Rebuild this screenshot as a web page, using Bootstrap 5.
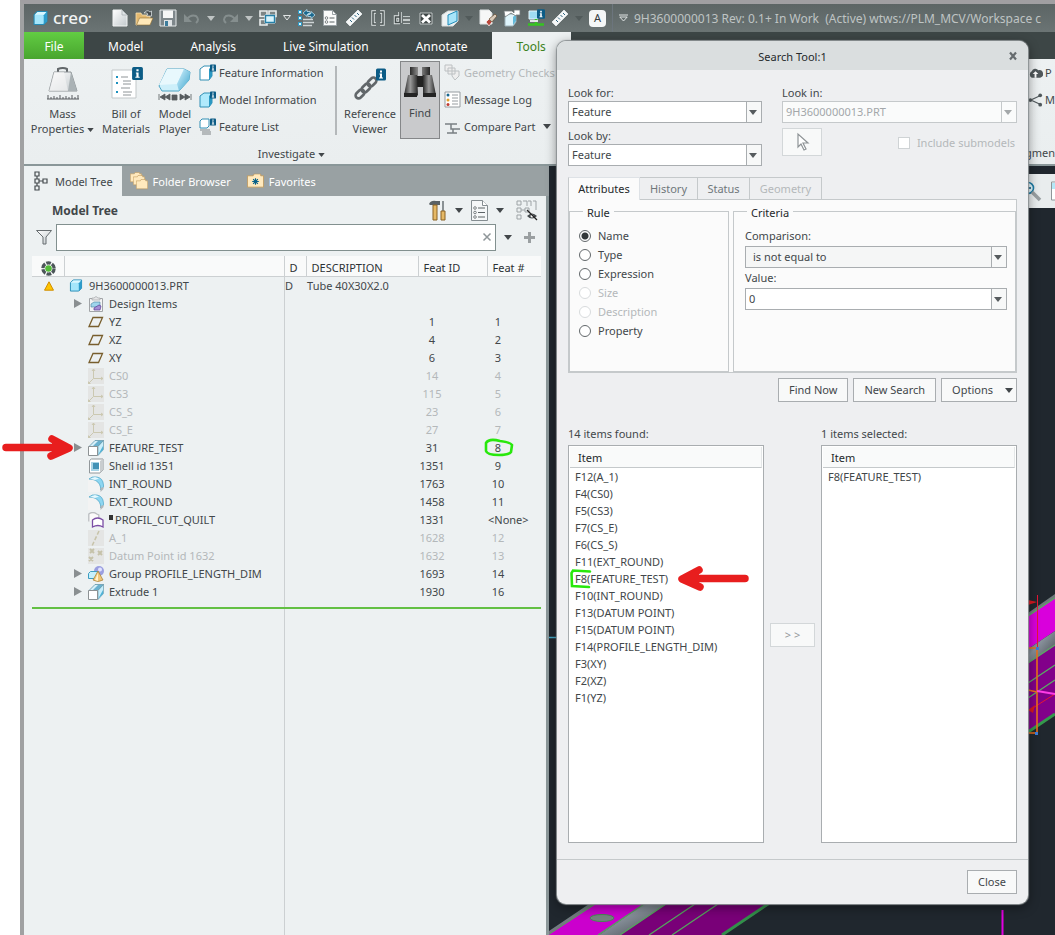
<!DOCTYPE html>
<html lang="en">
<head>
<meta charset="utf-8">
<meta name="viewport" content="width=device-width, initial-scale=1">
<title>Creo - Search Tool</title>
<link rel="stylesheet" href="https://cdn.jsdelivr.net/npm/bootstrap@5.3.0/dist/css/bootstrap.min.css">
<style>
:root{--ink:#42474a;--pane:#edf1f2;--line:#c5c9cb;--ctl:#a9adb0;--dim:#b4b8ba;
 --caret:url("data:image/svg+xml,%3Csvg xmlns='http://www.w3.org/2000/svg' viewBox='0 0 8 5'%3E%3Cpath d='M0 0h8L4 5z' fill='%23565b5e'/%3E%3C/svg%3E");
 --caret-dim:url("data:image/svg+xml,%3Csvg xmlns='http://www.w3.org/2000/svg' viewBox='0 0 8 5'%3E%3Cpath d='M0 0h8L4 5z' fill='%23a4a8aa'/%3E%3C/svg%3E")}
body{font-family:"Noto Sans",sans-serif;font-size:11px;line-height:15px;color:var(--ink);background:#fff;overflow:hidden}
svg{display:block;flex:none}
button{font-family:inherit;color:inherit}
.app{margin-left:20px;border-left:4px solid #a0a1a2;border-top:4px solid #a09fa2;min-height:100vh;background:var(--pane)}
.titlebar{height:28px;background:linear-gradient(#5c6565,#6b7474);padding-left:9px;gap:6px;color:#bfc4c4;overflow:hidden;font-size:12px}
.brand{width:72px;gap:5px;color:#f2f4f4;font:500 17px/20px "Noto Sans",sans-serif}
.brand sup{font-size:8px}
.tool{border:0;background:none;padding:0}
.keya{color:#363c3e;background:#f4f6f6;width:17px;height:17px;line-height:14px;font-size:11px}
.menubar{height:27px;background:#3d4646;gap:1px;font-size:12px}
.menubar .nav-link{color:#fff;padding:7px 23px 5px;line-height:15px;border-radius:0}
.menubar .file{background:linear-gradient(#62cc43,#48a52e);width:60px;padding:7px 0 5px;text-align:center}
.menubar .nav-link.active{background:var(--pane);color:#3c8220;padding:7px 25px 5px}
.ribbon{height:107px;border-bottom:2px solid #8a9799;background:linear-gradient(#edf1f2,#eaeeef);padding-left:4px;overflow:hidden}
.tools-row{height:84px}
.group-name{height:21px;padding-top:3px}
.big{border:1px solid transparent;background:none;padding:3px 0 0;height:78px;line-height:15px;display:flex;flex-direction:column;align-items:center;white-space:nowrap}
.big svg.pic{margin-bottom:5px}
.big.pressed{border-color:#858789;background:#c9cacc;width:40px;margin-top:-2px;padding-top:4px}
.w-mass{width:69px}.w-bill{width:58px}.w-play{width:40px}.w-refv{width:60px;margin-left:3px}.w-minis{width:140px}
.minis{margin-top:-4px}
.mini{border:0;background:none;padding:0;height:27px;gap:3px;white-space:nowrap}
.side{width:30px}
.side div.line{height:27px;gap:2px;padding-left:3px}
.dim{color:var(--dim)!important}
.vrule{width:2px;height:69px;background:#b4b8ba;margin-top:3px}
.panel{width:525px;flex:none;border-right:3px solid #8b9799}
.ptabs{height:30px;background:#99a1a3;margin-right:-3px}
.ptabs .nav-link{color:#fff;padding:0 8px;gap:5px;border-radius:0;height:30px}
.ptabs .nav-link.active{background:var(--pane);color:var(--ink);gap:6px;padding:0 9px}
.phead{height:28px;padding:0 8px 0 28px}
.phead strong{font-size:12px}
.pfilter{padding:0 11px 0 12px}
.filterbox{height:27px;border:1px solid #82908f;border-radius:0;padding:0 24px 0 6px;font-size:12px;background:#fff;min-height:0}
.clearx{right:4px;top:7px}
.treewrap{margin:5px 5px 0 8px;background:linear-gradient(#ccd0d2,#ccd0d2) 252px 0/1px 100% no-repeat}
.tree{table-layout:fixed;margin:0;line-height:17px;color:var(--ink)}
.tree th{height:20px;padding:1px 0 0 5px;font-weight:400;line-height:17px;background:#f9fafa;border-bottom:1px solid #ccd0d2;border-left:1px solid #ccd0d2;color:#2c3134;white-space:nowrap}
.tree th:first-child{border-left:0}
.tree td{height:18px;padding:0;border:0;background:none;white-space:nowrap;color:inherit;line-height:18px}
.tree tr.off{color:var(--dim)}
.tree tr.off svg{opacity:.9}
.c-stat{width:32px}.c-name{width:220px}.c-d{width:22px}.c-desc{width:112px}.c-id{width:69px}
.node{gap:5px;height:18px;padding-left:24px}
.node.branch{padding-left:10px}
.node.root{padding-left:5px;gap:6px}
.node .twist{margin-right:1px}
.quiltdot{margin:4px 2px 0 0}
.warn{margin:0 0 0 12px}
.fid,.fno{display:inline-block;text-align:center;margin-left:1px}
.fid{width:26px;white-space:nowrap}.fno{width:20px}
.insert{height:2px;background:#63c044;margin-top:6px}
.view{background:#20272e;min-width:0;min-height:769px}
.vtools{right:0;top:8px;width:56px;height:34px;background:#e9edee}
.dialog{right:27px;top:41px;width:471px;background:#eeeff1;border-radius:9px;box-shadow:0 0 1px 1px #8c9294,0 3px 12px #0007;overflow:hidden}
.dhead{height:29px;background:#dadedf;color:#25292b;padding-top:2px}
.closex{right:10px;top:9px}
.dbody{padding:15px 11px 16px}
.cols{gap:20px}
.leftcol{width:194px}
.leftcol label+select{margin-bottom:5px}
.dbody .leftcol label,.dbody .rightcol>label{padding-bottom:1px}
.picker{width:40px;margin-top:5px}
.pick{appearance:none;display:block;width:100%;height:22px;border:1px solid var(--ctl);border-radius:0;padding:0 20px 0 3px;font:11px/20px "Noto Sans",sans-serif;color:var(--ink);background:var(--caret) right 4px center/8px 5px no-repeat,linear-gradient(var(--ctl),var(--ctl)) right 14px top/1px 100% no-repeat,linear-gradient(#f7f8f8,#f7f8f8) right top/14px 100% no-repeat,#fff}
.pick.flat{background-color:#f5f6f6;padding-left:7px}
.pick:disabled{border-color:var(--line);color:#a3a7aa;opacity:1;background:var(--caret-dim) right 4px center/8px 5px no-repeat,linear-gradient(var(--line),var(--line)) right 14px top/1px 100% no-repeat,#fafbfb}
.dbtn{border:1px solid var(--ctl);border-radius:0;background:#f8f9f9;height:24px;padding:0 10px;font-size:11px;line-height:20px;color:var(--ink)}
.dbtn:disabled{border-color:#d3d7d9;background:#f8f9f9;color:#94989b;opacity:1}
.dbtn.sel{width:40px;height:28px}
.dbtn.move{width:45px}
.dbtn.opts{gap:12px;padding-right:3px}
.tickrow{gap:7px;padding-right:2px}
.form-check-input.tick{width:12px;height:12px;margin:0;float:none;border:1px solid #cfd3d5;border-radius:0;opacity:1}
.dtabs{border:0;height:23px;margin-top:11px}
.dtabs .nav-link{border:1px solid var(--line);border-left:0;border-radius:0;border-bottom:0;padding:0;height:22px;line-height:22px;color:#70777b;background:#eeeff1;text-align:center}
.dtabs .nav-link.active{border-left:1px solid var(--line);background:#fbfbfb;color:#25292b;height:23px}
.t72{width:72px}.t58{width:58px}.t52{width:52px}
.tabbody{border:1px solid var(--line);background:#fbfbfb;height:174px;padding-top:11px;gap:4px;margin-top:-1px}
.box{position:relative;border:1px solid var(--line);height:161px;margin:0;min-width:0;padding:16px 8px 0 11px}
.box.rule{width:160px;padding:14px 8px 0 9px}
.box legend{position:absolute;top:-7px;left:13px;width:auto;padding:0 4px;margin:0;background:#fbfbfb;font-size:11px;line-height:16px;color:#25292b;float:none}
.box .pick{margin:3px 0 2px}
.opt{height:19px;gap:7px}
.opt input{appearance:none;width:12px;height:12px;margin:0;border:1px solid #62676a;border-radius:50%;background:#fff}
.opt input:checked{background:radial-gradient(circle,#33383a 0 3px,#fff 4px)}
.opt input:disabled{border-color:#d8dbdd}
.actions{gap:5px;margin:5px 0 24px}
.caption{height:19px}
.found{width:196px;height:398px;border:1px solid var(--ctl);background:#fff;padding:1px}
.found h2{font-size:11px;font-weight:400;line-height:22px;height:21px;margin:0;padding-left:8px;background:#f9fafa;border:1px solid #e4e7e8;border-bottom-color:var(--line);border-width:0 1px 1px 0;color:#25292b}
.found li{height:17px;line-height:17px;padding-left:5px;position:relative;width:max-content}
.dfoot{border-top:1px solid var(--line);height:45px;padding:10px 11px}
.mark-over{position:absolute;pointer-events:none}
.m-f8{left:0;top:-1px}.m-left{left:107px;top:-5px}.m-right{left:-31px;top:-5px}.m-eight{left:-3px;top:-1px}
</style>
</head>
<body>
<svg width="0" height="0" class="position-absolute" aria-hidden="true">
<defs>
<linearGradient id="gs" x1="0" y1="0" x2="1" y2="1"><stop stop-color="#fff"/><stop offset="1" stop-color="#c2c9cc"/></linearGradient>
<linearGradient id="gb" x1="0" y1="0" x2="1" y2="1"><stop stop-color="#d8f4ff"/><stop offset="1" stop-color="#3da5cd"/></linearGradient>
<linearGradient id="gd" x1="0" x2="1"><stop stop-color="#2a2a2a"/><stop offset=".45" stop-color="#9a9a9a"/><stop offset="1" stop-color="#252525"/></linearGradient>
<linearGradient id="gt" x1="0" y1="0" x2="1" y2="1"><stop stop-color="#5d646a"/><stop offset=".4" stop-color="#88919b"/><stop offset="1" stop-color="#3f4549"/></linearGradient>
<symbol id="caret" viewBox="0 0 8 5"><path d="M0 0h8L4 5z" fill="currentColor"/></symbol>
<symbol id="info" viewBox="0 0 10 12"><rect width="10" height="12" rx="1.5" fill="#0c5c86"/><path d="M4 2h2v2H4zM3.500 5H6v4h1v1H3V9h1V6h-.5z" fill="#fff"/></symbol>
<symbol id="cube" viewBox="0 0 14 14"><path d="M1 4l3-3h9v9l-3 3H1z" fill="#a5e6fb" stroke="#268bb5"/><path d="M10 4.500V13l3-3V1z" fill="#2c9ccb"/><path d="M1.500 4L4.300 1.500h8L10 4z" fill="#d9f6ff"/></symbol>
<symbol id="doc" viewBox="0 0 18 18"><path d="M2 1h9l5 5v11H2z" fill="url(#gs)" stroke="#f2f4f4"/><path d="M11 1v5h5z" fill="#dfe4e6" stroke="#a9b1b4" stroke-width=".8"/></symbol>
<symbol id="doclist" viewBox="0 0 18 18"><path d="M2.500 1.500h9l4 4v11h-13z" fill="#fafbfb" stroke="#99a1a5"/><path d="M11.500 1.500v4h4" fill="none" stroke="#99a1a5"/><path d="M8.500 9h5M8.500 13h5" stroke="#5d6467"/><g fill="#fff" stroke="#5d6467" stroke-width=".8"><circle cx="5.500" cy="9" r="1.300"/><circle cx="5.500" cy="13" r="1.300"/></g></symbol>
<symbol id="doclist3" viewBox="0 0 17 21"><path d="M.5.500h11l5 5v15H.5z" fill="#f5f7f8" stroke="#858d91"/><path d="M11.500.5v5h5" fill="#fff" stroke="#858d91"/><path d="M7 8h7M7 12.500h7M7 17h7" stroke="#5d6467"/><g fill="#fff" stroke="#5d6467" stroke-width=".8"><circle cx="4" cy="8" r="1.300"/><circle cx="4" cy="12.500" r="1.300"/><circle cx="4" cy="17" r="1.300"/></g></symbol>
<symbol id="open" viewBox="0 0 18 18"><path d="M1 4h5l1 2h8v4H4l-2 6H1z" fill="#e4b970" stroke="#f5deb0" stroke-width=".8"/><path d="M4.500 9H18l-3 7H1.500z" fill="#ffe8b8" stroke="#8f6d31" stroke-width=".6"/><path d="M9 4q3-4 6-1l1.500-1v5h-5l1.500-2Q11 3 9 4z" fill="#454b4d" stroke="#e7ecee" stroke-width=".7"/></symbol>
<symbol id="save" viewBox="0 0 18 18"><path d="M1 1h16v16H1z" fill="#7e878b" stroke="#e6eaeb"/><path d="M4 1.500h10V9H4z" fill="#f5f6f6"/><path d="M5 11h8v6H5z" fill="#dfe3e5"/><path d="M6 12h3v5H6z" fill="#3e7d9c"/></symbol>
<symbol id="undo" viewBox="0 0 18 18"><path d="M4 10q4-5 9-3 4 3.500 0 7" fill="none" stroke="#858e8e" stroke-width="2"/><path d="M1 5v8h8z" fill="#858e8e"/></symbol>
<symbol id="wins" viewBox="0 0 18 18"><g fill="#7d8585" stroke="#e9eded" stroke-width="1.600"><path d="M1 2h7v5.500H1zM10 2h7v5.500h-7zM1 10.500h7V16H1z"/></g><path d="M6 6h10v8H6z" fill="#d9f4fd" stroke="#fff"/><path d="M6.500 6.500h9v7h-9z" fill="none" stroke="#2580a8" stroke-width="1.400"/></symbol>
<symbol id="regen" viewBox="0 0 18 18"><g fill="#dff5fd" stroke="#2c9ac6"><path d="M1.500 1.500h3v3h-3zM1.500 7.500h3v3h-3zM1.500 13.500h3v3h-3z"/></g><path d="M6 10.500h10M6 13.500h11M6 16.500h9" stroke="#ced4d5" stroke-width="1.500"/><path d="M6 4l4-3.500v2h3v3h-3v2zM18 6l-4-3.500v2h-3v3h3v2z" fill="#1a678d" stroke="#c9edfb" stroke-width=".7"/></symbol>
<symbol id="ruler" viewBox="0 0 18 18"><path d="M1 13L13 1l4 4L5 17z" fill="#f6f7f7" stroke="#dde2e3"/><path d="M5 11l2 2M7 8.500l2 2M9.500 6l2 2M12 4l2 2" stroke="#2c6480"/></symbol>
<symbol id="brackets" viewBox="0 0 18 18"><path d="M7 3H4v12h3M11 3h3v12h-3" fill="none" stroke="#dfe4e4" stroke-width="3.400"/><path d="M7 3H4v12h3M11 3h3v12h-3" fill="none" stroke="#454d4d" stroke-width="1.500"/></symbol>
<symbol id="dim" viewBox="0 0 18 18"><g fill="none" stroke="#e2e7e7" stroke-width="3.400"><path d="M7 3v11M7 8H2.500v5.500H7M10 9h7M10 13h7"/></g><g fill="none" stroke="#454d4d" stroke-width="1.600"><path d="M7 3v11M7 8H2.500v5.500H7M10 9h7M10 13h7"/></g></symbol>
<symbol id="xbox" viewBox="0 0 18 18"><path d="M3 4h12v11H3z" fill="#3f4747" stroke="#d8dddd" stroke-width=".8"/><path d="M5 6l8 7.500M13 6l-8 7.500" stroke="#fff" stroke-width="2.800"/></symbol>
<symbol id="frame" viewBox="0 0 18 18"><path d="M1 6l6-4h10v10l-5 5H1z" fill="#eef2f3" stroke="#d8dddd"/><path d="M7 6l9-4v10l-9 4z" fill="#a8e5fa" stroke="#1f8cb9"/></symbol>
<symbol id="erase" viewBox="0 0 18 18"><path d="M1 1h9l3 3v11H1z" fill="#f6f7f7" stroke="#dde1e2"/><path d="M7 13l3-3 3 3-3 4z" fill="#b9483c" stroke="#fff" stroke-width=".7"/><path d="M10 10l6-5 2 2-5 6z" fill="#d9cbbb" stroke="#62482c" stroke-width=".7"/></symbol>
<symbol id="camera" viewBox="0 0 18 18"><path d="M2 8l3-3h8v8l-3 4H2z" fill="#dff5fc" stroke="#9eb2ba"/><path d="M10 8v8l3-4V5z" fill="#61b9d9"/><path d="M1 2h8l2 2V1h6v5h-4v1L8 4 2 8z" fill="#fff" stroke="#747b7e" stroke-width=".8"/></symbol>
<symbol id="net" viewBox="0 0 18 18"><path d="M2 2h9v8H2z" fill="#9fdcf2" stroke="#e4f5fb"/><path d="M9 10v5M1 15.500h16" stroke="#36c421" stroke-width="2.600"/><path d="M3 12h8" stroke="#e2e6e8" stroke-width="2"/><use href="#info" x="10" width="8" height="10"/></symbol>
<symbol id="cs" viewBox="0 0 16 16"><path d="M0 0h16v16H0z" fill="#e4e4e3"/><path d="M5.500 1v9.500H15M5.500 10.500L1 15M4 3l1.500-2L7 3M13 9l2 1.500-2 1.500" fill="none" stroke="#c8c4aa"/><path d="M0 13v3h3z" fill="#c8c4aa"/></symbol>
<symbol id="plane" viewBox="0 0 16 16"><path d="M5 3.500h9.500l-4 9H1z" fill="none" stroke="#785e2d" stroke-width="1.300"/></symbol>
<symbol id="extrude" viewBox="0 0 16 16"><path d="M1 6.500L7 .5h8.500L10 6.500z" fill="#69b1cf" stroke="#568b9e" stroke-width=".6"/><path d="M7 1h3L5 6H2z" fill="#d8eff8"/><path d="M10 6.500l5.500-6v9L10 15.500z" fill="#c8eefb" stroke="#568b9e" stroke-width=".6"/><path d="M10 15l5-5V6z" fill="#4fb2d6"/><path d="M.5 6.500h9v9h-9z" fill="#fff" stroke="#8d9294"/></symbol>
<symbol id="shell" viewBox="0 0 16 16"><path d="M1.500 2.500l2-1.500H15v11l-3 3H1.500z" fill="#fff" stroke="#91979a"/><path d="M12 3v12l3-3V1z" fill="#c9cdcf"/><path d="M3 4h8v9H3z" fill="#a9d4e6"/><path d="M5 5h6v6H5z" fill="#4292b6"/></symbol>
<symbol id="round" viewBox="0 0 16 16"><path d="M0 4h6l6 6v6H0z" fill="#f3f3f3"/><path d="M1 3q3-3 8-2 6 1 6.500 8v2l-3 3V11Q11 5 5 3.500z" fill="#8ed6f1" stroke="#3a9ac0" stroke-width=".6"/><path d="M2 2.700l5-1.700 4 1.500-4 1.500z" fill="#e5f8fe"/><path d="M12.500 12v4l3-3v-2z" fill="#b2b7ba"/></symbol>
<symbol id="quilt" viewBox="0 0 16 16"><path d="M.8 9.500V2q4-3 8 0l2 1v3" fill="#fafafa" stroke="#babdc0" stroke-width="1.300"/><path d="M4.500 15V8q5-4 10.500 0v7q-5-3-10.500 0z" fill="#fff" stroke="#7a4da5" stroke-width="1.300"/></symbol>
<symbol id="axis" viewBox="0 0 16 16"><path d="M0 0h16v16H0z" fill="#e4e4e3"/><path d="M11 1L4 16" stroke="#c3bfa2" stroke-width="1.500" stroke-dasharray="4 2"/></symbol>
<symbol id="points" viewBox="0 0 16 16"><path d="M0 0h16v16H0z" fill="#e4e4e3"/><path d="M2 1l4 4m0-4L2 5M10 3l4 4m0-4l-4 4M1 9l4 4m0-4l-4 4" stroke="#c1bda2" stroke-width="1.900"/></symbol>
<symbol id="group" viewBox="0 0 16 16"><circle cx="11" cy="5" r="5" fill="#9b9fe0"/><circle cx="12" cy="3.500" r="2" fill="#e1e3ff"/><path d="M.5 7.500l2-2H10v7H.5z" fill="#c5effc" stroke="#3d9dc0"/><path d="M10 5l5 9q-5 3-10 0z" fill="#efc679" stroke="#a57c33" stroke-width=".7"/><path d="M10 7v8l-3-1z" fill="#fff1ce"/></symbol>
<symbol id="clip" viewBox="0 0 16 16"><path d="M1.500 2.500h13v13h-13z" fill="#f4f4f5" stroke="#a1a4a7"/><path d="M4 4h8V2h-2L8 .5 6 2H4z" fill="#e6e7e8" stroke="#a1a4a7" stroke-width=".7"/><path d="M3 8l3-2h6v4l-3 1H3z" fill="#9fd5ec" stroke="#48829a" stroke-width=".6"/><path d="M6 12l5-3 2 1-1 4H6z" fill="#a48ed5" stroke="#5b3d96" stroke-width=".7"/></symbol>
<symbol id="folder" viewBox="0 0 18 16"><path d="M.5 2.500h6l1-2h7v2h3v12H.5z" fill="#ffe9bd" stroke="#bb9355" stroke-width=".8"/></symbol>
<symbol id="redarrow" viewBox="0 0 72 26"><path d="M4 13.500h56M50 5l17 9-18 8" fill="none" stroke="#e81e1e" stroke-width="7.500" stroke-linecap="round" stroke-linejoin="round"/><path d="M50 4l20 9.500L50 22z" fill="#e81e1e"/></symbol>
</defs></svg>

<div class="app d-flex flex-column">
 <header>
  <div class="titlebar d-flex align-items-center">
   <div class="brand d-flex align-items-center"><svg width="15" height="16"><use href="#cube"/></svg><span>creo<sup>•</sup></span></div>
   <button class="tool" aria-label="New"><svg width="18" height="18"><use href="#doc"/></svg></button>
   <button class="tool" aria-label="Open"><svg width="18" height="18"><use href="#open"/></svg></button>
   <button class="tool" aria-label="Save"><svg width="18" height="18"><use href="#save"/></svg></button>
   <button class="tool" aria-label="Undo"><svg width="18" height="18"><use href="#undo"/></svg></button>
   <svg width="8" height="5"><use href="#caret"/></svg>
   <button class="tool" aria-label="Redo"><svg width="18" height="18" viewBox="0 0 18 18"><g transform="matrix(-1 0 0 1 18 0)"><use href="#undo" width="18" height="18"/></g></svg></button>
   <svg width="8" height="5"><use href="#caret"/></svg>
   <button class="tool" aria-label="Windows"><svg width="18" height="18"><use href="#wins"/></svg></button>
   <svg width="8" height="6" viewBox="0 0 8 6"><path d="M.5.500h7L4 5z" fill="none" stroke="#e1e5e5"/></svg>
   <button class="tool" aria-label="Regenerate"><svg width="18" height="18"><use href="#regen"/></svg></button>
   <button class="tool" aria-label="List"><svg width="18" height="18"><use href="#doclist"/></svg></button>
   <button class="tool" aria-label="Measure"><svg width="18" height="18"><use href="#ruler"/></svg></button>
   <button class="tool" aria-label="Parameters"><svg width="18" height="18"><use href="#brackets"/></svg></button>
   <button class="tool" aria-label="Relations"><svg width="18" height="18"><use href="#dim"/></svg></button>
   <button class="tool" aria-label="Close window"><svg width="18" height="18"><use href="#xbox"/></svg></button>
   <button class="tool" aria-label="Display style"><svg width="18" height="18"><use href="#frame"/></svg></button>
   <svg width="8" height="5" color="#515a5a"><use href="#caret"/></svg>
   <button class="tool" aria-label="Erase"><svg width="18" height="18"><use href="#erase"/></svg></button>
   <button class="tool" aria-label="Saved views"><svg width="18" height="18"><use href="#camera"/></svg></button>
   <button class="tool" aria-label="Server"><svg width="18" height="18"><use href="#net"/></svg></button>
   <button class="tool" aria-label="Measure"><svg width="18" height="18"><use href="#ruler"/></svg></button>
   <svg width="8" height="5" color="#515a5a"><use href="#caret"/></svg>
   <button class="tool keya rounded-1">A</button>
   <span class="border-start border-secondary h-100"></span>
   <svg width="9" height="8" viewBox="0 0 9 8"><path d="M0 1h9" stroke="#dfe3e3"/><path d="M.8 3h7.400L4.500 7z" fill="none" stroke="#dfe3e3"/></svg>
   <span class="text-nowrap">9H3600000013 Rev: 0.1+ In Work &nbsp;(Active) wtws://PLM_MCV/Workspace c</span>
  </div>
  <nav class="menubar nav flex-nowrap">
   <a class="nav-link file" href="#">File</a><a class="nav-link" href="#">Model</a><a class="nav-link" href="#">Analysis</a><a class="nav-link text-nowrap" href="#">Live Simulation</a><a class="nav-link" href="#">Annotate</a><a class="nav-link active" href="#">Tools</a>
  </nav>
  <div class="ribbon d-flex">
   <div class="d-flex flex-column">
    <div class="tools-row d-flex pt-1">
     <button class="big w-mass"><svg class="pic" width="34" height="34" viewBox="0 0 34 34"><path d="M12 5V2q5-2 9 0v3" fill="none" stroke="#62676a" stroke-width="2"/><path d="M8 5h17l6 19H3z" fill="url(#gs)" stroke="#8e9497"/><path d="M8 5L3 24h19L18 5z" fill="#f6f7f7" opacity=".6"/><path d="M25 5l6 19h-9z" fill="#aab2b5"/><path d="M1 32h32M2 32v-4M5 32v-2M8 32v-3M11 32v-2M14 32v-4M17 32v-2M20 32v-3M23 32v-2M26 32v-4M29 32v-2M32 32v-4" stroke="#565b5e"/></svg><span>Mass</span><span>Properties <svg class="d-inline" width="7" height="4"><use href="#caret"/></svg></span></button>
     <button class="big w-bill"><svg class="pic" width="34" height="34" viewBox="0 0 34 34"><path d="M3 3h24v28H3z" fill="#fff" stroke="#c2c7c9"/><path d="M12 10h7M14 14h8M14 17h8M12 21h9M14 25h9M14 28h8" stroke="#8e9497"/><path d="M7 9h2v2H7zM7 15h2v2H7zM7 24h2v2H7z" fill="#1c91bf"/><use href="#info" x="23" width="11" height="13"/></svg><span>Bill of</span><span>Materials</span></button>
     <button class="big w-play"><svg class="pic" width="34" height="34" viewBox="0 0 34 34"><path d="M1 19L9 2h17l6 3-1 8-10 11H4z" fill="#cdeffa" stroke="#4ca4c4"/><path d="M1 18l8-16h17l-7 15z" fill="#e8f8fd"/><path d="M19 17l7-15 6 3-1 8-10 11z" fill="url(#gb)"/><path d="M1 27v6M7 27l-5 3 5 3zM12 27l-5 3 5 3zM14 28h5v5h-5zM22 27l5 3-5 3zM27 27l5 3-5 3zM33 27v6" fill="#565b5e" stroke="#565b5e" stroke-width=".8"/></svg><span>Model</span><span>Player</span></button>
     <div class="minis w-minis d-flex flex-column ps-1">
      <button class="mini d-flex align-items-center"><svg width="17" height="17" viewBox="0 0 17 17"><path d="M1 5l4-3h8v10l-3 4H1z" fill="#fff" stroke="#318fb4"/><path d="M10 5v11l3-4V2z" fill="#2b98c2"/><use href="#info" x="11" width="6" height="8"/></svg>Feature Information</button>
      <button class="mini d-flex align-items-center"><svg width="17" height="17" viewBox="0 0 17 17"><path d="M1 5l4-3h8v10l-3 4H1z" fill="#b1eafc" stroke="#318fb4"/><path d="M10 5v11l3-4V2z" fill="#2b98c2"/><use href="#info" x="11" width="6" height="8"/></svg>Model Information</button>
      <button class="mini d-flex align-items-center"><svg width="17" height="17" viewBox="0 0 17 17"><path d="M1 3l2-2h7v7l-2 2H1z" fill="#fff" stroke="#318fb4"/><path d="M1 12h10M3 14h9M3 16h9" stroke="#7e8487"/><use href="#info" x="11" width="6" height="8"/></svg>Feature List</button>
     </div>
     <div class="vrule"></div>
     <button class="big w-refv"><svg class="pic" width="34" height="34" viewBox="0 0 34 34"><g fill="none" stroke="#62676a" stroke-width="2.600"><rect x="2" y="24" width="10" height="6" rx="3" transform="rotate(-45 7 27)"/><rect x="8" y="18" width="10" height="6" rx="3" transform="rotate(-45 13 21)"/><rect x="14" y="12" width="10" height="6" rx="3" transform="rotate(-45 19 15)"/></g><use href="#info" x="23" y="1" width="10" height="13"/></svg><span>Reference</span><span>Viewer</span></button>
     <button class="big pressed"><svg class="pic" width="34" height="34" viewBox="0 0 34 34"><path d="M7 1h8v14H7zM19 1h8v14h-8z" fill="url(#gd)"/><path d="M13 10h8v11h-8z" fill="#222"/><path d="M5 9h9l1 20-2 2H2l-1-2z" fill="url(#gd)"/><path d="M20 9h9l4 20-2 2H21l-1-2z" fill="url(#gd)"/><path d="M1 27h13v4H1zM20 27h13v4H20z" fill="#242424"/></svg>Find</button>
     <div class="minis d-flex flex-column ps-1">
      <button class="mini d-flex align-items-center dim"><svg width="17" height="17" viewBox="0 0 17 17" fill="#eee" stroke="#bcc0c2"><path d="M1 1h7v6H1zM4 4h7v6H4zM8 7h7v5l-4 4-3-4z"/></svg>Geometry Checks</button>
      <button class="mini d-flex align-items-center"><svg width="17" height="17" viewBox="0 0 17 17"><path d="M1 1h15v15H1z" fill="#fff" stroke="#969ca0"/><path d="M8 4h6M8 7h6M8 10h6M8 13h6" stroke="#969ca0"/><circle cx="4" cy="4" r="1.500" fill="#17678f"/><circle cx="4" cy="9" r="1.500" fill="#e2a12b"/><circle cx="4" cy="13.500" r="1.500" fill="#c03b32"/></svg>Message Log</button>
      <button class="mini d-flex align-items-center"><svg width="17" height="17" viewBox="0 0 17 17" fill="none" stroke="#7a8083" stroke-width="1.500"><path d="M1 6h12M7 6v5h9M9 11v4M3 15h10"/></svg>Compare Part <svg class="ms-1" width="8" height="5"><use href="#caret"/></svg></button>
     </div>
    </div>
    <div class="group-name text-center">Investigate <svg class="d-inline" width="7" height="4"><use href="#caret"/></svg></div>
   </div>
   <div class="side ms-auto d-flex flex-column">
    <div class="line d-flex align-items-center"><svg width="15" height="12" viewBox="0 0 16 12"><path d="M4 11a4 4 0 0 1 0-7 4 4 0 0 1 7-1 4 4 0 0 1 2 8z" fill="#50585b"/><path d="M8 4L5 7h2v4h2V7h2z" fill="#fff"/></svg>P</div>
    <div class="line d-flex align-items-center"><svg width="15" height="14" viewBox="0 0 16 14"><path d="M14 2L3 7l11 5" fill="none" stroke="#50585b" stroke-width="1.200"/><circle cx="13" cy="2" r="2" fill="#50585b"/><circle cx="2.500" cy="7" r="2" fill="#50585b"/><circle cx="13" cy="12" r="2" fill="#50585b"/></svg>M</div>
    <div class="mt-auto mb-1">gmen</div>
   </div>
  </div>
 </header>

 <main class="d-flex flex-grow-1">
  <section class="panel d-flex flex-column">
   <nav class="ptabs nav">
    <a class="nav-link active d-flex align-items-center" href="#"><svg width="16" height="20" viewBox="0 0 16 20" fill="none" stroke="#454b4e" stroke-width="1.200"><path d="M2 1h4v4H2zM2 8h4v4H2zM2 15h4v4H2zM10 8h4v4h-4zM6 10h4M4 5v3M4 12v3"/></svg>Model Tree</a>
    <a class="nav-link d-flex align-items-center" href="#"><svg width="18" height="18" viewBox="0 0 18 18"><use href="#folder" width="12" height="11"/><use href="#folder" x="3" y="3" width="12" height="11"/><use href="#folder" x="6" y="7" width="12" height="11"/></svg>Folder Browser</a>
    <a class="nav-link d-flex align-items-center" href="#"><svg width="17" height="16" viewBox="0 0 18 16"><use href="#folder" width="18" height="16"/><path d="M9 5v7M5.500 8.500h7M6.500 6l5 5m0-5l-5 5" stroke="#086189" stroke-width="1.200"/></svg>Favorites</a>
   </nav>
   <div class="phead d-flex align-items-center">
    <strong class="me-auto">Model Tree</strong>
    <svg width="18" height="21" viewBox="0 0 18 21"><path d="M0 4q2-4 7-3h4v4H1z" fill="#5a6266"/><path d="M4 5h4v15H4z" fill="#e6b966" stroke="#8a6225"/><path d="M14 1v11" stroke="#687074" stroke-width="1.500"/><path d="M12 11h4v9h-4z" fill="#e6b966" stroke="#8a6225"/></svg>
    <svg width="8" height="5" class="mx-2"><use href="#caret"/></svg>
    <svg width="17" height="21" class="me-1"><use href="#doclist3"/></svg>
    <svg width="8" height="5" class="ms-1 me-2"><use href="#caret"/></svg>
    <svg class="ms-1" width="22" height="21" viewBox="0 0 22 21"><path d="M1 1h4v4H1zM1 8h4v4H1zM1 15h4v4H1zM9 8h4v4H9zM5 10h4M7 1h4v5M12 1h3v5M17 1h3v9" fill="none" stroke="#9da3a6"/><path d="M11 16q5-5 10 0-5 5-10 0z" fill="#454b4e"/><circle cx="16" cy="16" r="1.500" fill="#fff"/><path d="M11 10l10 10" stroke="#222" stroke-width="1.300"/></svg>
   </div>
   <div class="pfilter d-flex align-items-center">
    <svg width="16" height="15" viewBox="0 0 16 15"><path d="M.5.500h15L10 7v7H7V7z" fill="url(#gs)" stroke="#676d70"/></svg>
    <div class="position-relative flex-grow-1 mx-1"><input class="filterbox form-control" type="text" aria-label="Filter model tree"><button class="tool position-absolute clearx" aria-label="Clear"><svg width="10" height="12" viewBox="0 0 10 12"><path d="M1.500 2.500l7 7m0-7l-7 7" stroke="#8f9699" stroke-width="1.500"/></svg></button></div>
    <svg width="8" height="5" class="ms-1 me-2"><use href="#caret"/></svg>
    <svg class="ms-1" width="11" height="11" viewBox="0 0 11 11"><path d="M5.500 0v11M0 5.500h11" stroke="#9a9fa1" stroke-width="3"/></svg>
   </div>
   <div class="treewrap flex-grow-1">
    <table class="tree table table-borderless">
     <colgroup><col class="c-stat"><col class="c-name"><col class="c-d"><col class="c-desc"><col class="c-id"><col></colgroup>
     <thead><tr><th><svg class="ms-1" width="15" height="15" viewBox="0 0 16 16"><circle cx="8" cy="8" r="6" fill="none" stroke="#4c5659" stroke-width="3.500" stroke-dasharray="5 1.280"/><circle cx="8" cy="8" r="3.500" fill="#54bc3a"/></svg></th><th></th><th>D</th><th>DESCRIPTION</th><th>Feat ID</th><th>Feat #</th></tr></thead>
     <tbody id="rows"></tbody>
    </table>
    <div class="insert"></div>
   </div>
  </section>
  <section class="view flex-grow-1 position-relative overflow-hidden">
   <svg class="position-absolute" width="506" height="769" viewBox="549 166 506 769">
    <path d="M549 931l43-29h7l-50 33z" fill="#717d80"/><path d="M549 933l48-31h50l-48 33h-50z" fill="#cb00cd"/><path d="M599 935l48-33h23l-48 33z" fill="url(#gt)"/><path d="M620 935l49-33h104l-49 33z" fill="#790078"/>
    <path d="M549 934l49-32M598 935l49-33M620 935l49-33M649 935l49-33M672 935l49-33" stroke="#55a55d" stroke-width="1.300"/><path d="M722 935l49-33" stroke="#32904a" stroke-width="3"/>
    <ellipse cx="602" cy="918" rx="12" ry="3.500" fill="#74837f" stroke="#448b50"/>
    <path d="M1002.500 910v25" stroke="#e400e2" stroke-width="2"/><path d="M549 637.500h9" stroke="#43a8c6" stroke-width="1.500"/>
    <path d="M1028 613l27-19v4l-27 19z" fill="#6f7a7c"/><path d="M1028 616l27-18v33l-27 18z" fill="#d900dc"/><path d="M1028 649l27-18v15l-27 18z" fill="url(#gt)"/><path d="M1028 663l27-18v69l-27 18z" fill="#82008a"/>
    <path d="M1028 616l27-18M1028 663l27-18M1028 683l27-18M1028 698l27-18" stroke="#5aad63" stroke-width="1.300"/><path d="M1028 732l27-18" stroke="#349a4c" stroke-width="3"/>
    <path d="M1037.500 595v53M1028 711l27-17" stroke="#e41735"/><path d="M1028 600l9 2-9 3zM1028 710l7-5-2 8z" fill="#d91820"/><path d="M1028 648h9v85h-9M1028 690l9 2" fill="none" stroke="#ec701b" stroke-width="1.600"/><path d="M1037 691l18 3" stroke="#ff3be6" stroke-width="1.800"/><path d="M1036 647h3v3h-3zM1035 732h3v3h-3z" fill="#3c7dd9"/>
   </svg>
   <div class="vtools position-absolute d-flex align-items-center justify-content-end"><svg width="34" height="24" viewBox="0 0 34 24"><circle cx="7" cy="9" r="5.500" fill="#e3f8ff" stroke="#1c7ca6" stroke-width="1.600"/><path d="M4 9h6" stroke="#146080" stroke-width="1.600"/><path d="M11 13l8 8" stroke="#999fa2" stroke-width="3.500"/><path d="M30.500 3h9v18h-9z" fill="#fff" stroke="#8f9699"/><path d="M31 4h5v6h-5z" fill="#b4e8f8"/></svg></div>
  </section>
 </main>
</div>

<section class="dialog position-absolute" role="dialog" aria-label="Search Tool:1">
 <div class="dhead position-relative d-flex align-items-center justify-content-center">Search Tool:1<button class="tool position-absolute closex" aria-label="Close dialog"><svg width="10" height="12" viewBox="0 0 10 12"><path d="M2 2.500l6 7m0-7l-6 7" stroke="#666c6f" stroke-width="2.200"/></svg></button></div>
 <div class="dbody">
  <div class="cols d-flex">
   <div class="leftcol">
    <label class="d-block" for="lf">Look for:</label><select id="lf" class="pick"><option>Feature</option></select>
    <label class="d-block" for="lb">Look by:</label><select id="lb" class="pick mb-0"><option>Feature</option></select>
   </div>
   <div class="rightcol flex-grow-1">
    <label class="d-block" for="li">Look in:</label><select id="li" class="pick" disabled><option>9H3600000013.PRT</option></select>
    <div class="d-flex justify-content-between align-items-center">
     <div class="picker"><button class="dbtn sel px-2" disabled aria-label="Select"><svg width="22" height="20" viewBox="0 0 22 20"><path d="M7 2v13l3-3 3 6 2-1-3-6h5z" fill="#fff" stroke="#8e9396" stroke-width="1.200"/></svg></button></div>
     <div class="tickrow d-flex align-items-center mt-1"><input class="form-check-input tick" type="checkbox" id="sub" disabled><label for="sub" class="dim">Include submodels</label></div>
    </div>
   </div>
  </div>
  <nav class="dtabs nav nav-tabs"><a class="nav-link active t72" href="#">Attributes</a><a class="nav-link t58" href="#">History</a><a class="nav-link t52" href="#">Status</a><a class="nav-link dim t72" href="#">Geometry</a></nav>
  <div class="tabbody d-flex">
   <fieldset class="box rule"><legend>Rule</legend>
    <label class="opt d-flex align-items-center"><input type="radio" name="rule" checked>Name</label>
    <label class="opt d-flex align-items-center"><input type="radio" name="rule">Type</label>
    <label class="opt d-flex align-items-center"><input type="radio" name="rule">Expression</label>
    <label class="opt d-flex align-items-center dim"><input type="radio" name="rule" disabled>Size</label>
    <label class="opt d-flex align-items-center dim"><input type="radio" name="rule" disabled>Description</label>
    <label class="opt d-flex align-items-center"><input type="radio" name="rule">Property</label>
   </fieldset>
   <fieldset class="box flex-grow-1"><legend>Criteria</legend>
    <label class="d-block" for="cmp">Comparison:</label><select id="cmp" class="pick flat"><option>is not equal to</option></select>
    <label class="d-block" for="val">Value:</label><select id="val" class="pick"><option>0</option></select>
   </fieldset>
  </div>
  <div class="actions d-flex justify-content-end"><button class="dbtn">Find Now</button><button class="dbtn">New Search</button><button class="dbtn opts d-flex align-items-center">Options<svg width="8" height="5"><use href="#caret"/></svg></button></div>
  <div class="d-flex justify-content-between">
   <div><div class="caption">14 items found:</div>
    <div class="found"><h2>Item</h2><ul class="list-unstyled m-0">
     <li>F12(A_1)</li><li>F4(CS0)</li><li>F5(CS3)</li><li>F7(CS_E)</li><li>F6(CS_S)</li><li>F11(EXT_ROUND)</li>
     <li>F8(FEATURE_TEST)<svg class="mark-over m-f8" width="24" height="20" viewBox="0 0 24 20"><path d="M20 2.500L3 1.500 1.500 4l.5 13 17 1" fill="none" stroke="#28e80c" stroke-width="2.600" stroke-linecap="round"/></svg><svg class="mark-over m-left" width="72" height="26" viewBox="0 0 72 26"><g transform="matrix(-1 0 0 1 72 0)"><use href="#redarrow" width="72" height="26"/></g></svg></li>
     <li>F10(INT_ROUND)</li><li>F13(DATUM POINT)</li><li>F15(DATUM POINT)</li><li>F14(PROFILE_LENGTH_DIM)</li><li>F3(XY)</li><li>F2(XZ)</li><li>F1(YZ)</li></ul></div></div>
   <button class="dbtn move align-self-center" disabled>&gt; &gt;</button>
   <div><div class="caption">1 items selected:</div>
    <div class="found"><h2>Item</h2><ul class="list-unstyled m-0"><li>F8(FEATURE_TEST)</li></ul></div></div>
  </div>
 </div>
 <div class="dfoot d-flex justify-content-end"><button class="dbtn">Close</button></div>
</section>

<script src="https://cdn.jsdelivr.net/npm/bootstrap@5.3.0/dist/js/bootstrap.bundle.min.js"></script>
<script>
// name, icon, feature id, feature number, branch, suppressed
const items=[["Design Items","clip","","",1,0],["YZ","plane",1,1],["XZ","plane",4,2],["XY","plane",6,3],["CS0","cs",14,4,0,1],["CS3","cs",115,5,0,1],["CS_S","cs",23,6,0,1],["CS_E","cs",27,7,0,1],["FEATURE_TEST","extrude",31,8,1,0],["Shell id 1351","shell",1351,9],["INT_ROUND","round",1763,10],["EXT_ROUND","round",1458,11],["PROFIL_CUT_QUILT","quilt",1331,"&lt;None&gt;"],["A_1","axis",1628,12,0,1],["Datum Point id 1632","points",1632,13,0,1],["Group PROFILE_LENGTH_DIM","group",1693,14,1,0],["Extrude 1","extrude",1930,16,1,0]];
let html='<tr><td class="align-middle"><svg class="warn" width="10" height="10" viewBox="0 0 10 10"><path d="M5 .8L9.500 9.200h-9z" fill="#ffc400" stroke="#cf8d00"/></svg></td><td><div class="node root d-flex align-items-center"><svg width="14" height="13"><use href="#cube"/></svg>9H3600000013.PRT</div></td><td>&#8202;D</td><td>&#8202;Tube 40X30X2.0</td><td></td><td></td></tr>';
for(const [n,ic,id,no,br,off] of items){
 const ft=n==="FEATURE_TEST";
 html+=`<tr class="${off?'off':''}"><td class="position-relative">${ft?'<svg class="mark-over m-right" width="74" height="26"><use href="#redarrow"/></svg>':''}</td><td><div class="node d-flex align-items-center ${br?'branch':''}">${br?'<svg class="twist" width="8" height="9" viewBox="0 0 8 9"><path d="M0 0l8 4.500L0 9z" fill="#8a8f91"/></svg>':''}<svg width="16" height="16"><use href="#${ic}"/></svg><span>${ic==="quilt"?'<svg class="d-inline align-top quiltdot" width="4" height="5"><path d="M0 0h4v5H0z" fill="#333"/></svg>':''}${n}</span></div></td><td></td><td></td><td><span class="fid">${id}</span></td><td class="position-relative"><span class="fno">${no}</span>${ft?'<svg class="mark-over m-eight" width="30" height="20" viewBox="0 0 30 20"><path d="M16 3Q5 0 2 5v8q1 4 13 4 10 0 12-3l1-7q-2-3-12-4z" fill="none" stroke="#28e80c" stroke-width="2.600"/></svg>':''}</td></tr>`;
}
document.getElementById('rows').innerHTML=html;
</script>
</body>
</html>
